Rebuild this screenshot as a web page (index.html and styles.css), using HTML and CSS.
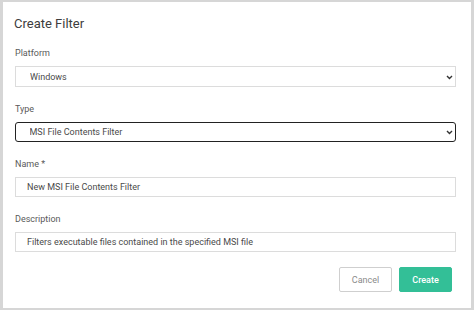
FILE: index.html
```html
<!DOCTYPE html>
<html lang="en">
<head>
<meta charset="utf-8">
<title>Create Filter</title>
<link rel="stylesheet" href="styles.css">
</head>
<body>
<div class="frame">
  <h1 class="title">Create Filter</h1>
  <form class="form">
    <div class="field">
      <label class="label" for="platform">Platform</label>
      <div class="select-wrap select-wrap--tall">
        <select id="platform" class="control select"><option>Windows</option></select>
        <svg class="chev" width="7" height="5" viewBox="0 0 7 5"><path d="M1 1 L3.5 3.5 L6 1" fill="none" stroke="#333" stroke-width="1.4"/></svg>
      </div>
    </div>
    <div class="field">
      <label class="label" for="type">Type</label>
      <div class="select-wrap">
        <select id="type" class="control select select--focus"><option>MSI File Contents Filter</option></select>
        <svg class="chev" width="7" height="5" viewBox="0 0 7 5"><path d="M1 1 L3.5 3.5 L6 1" fill="none" stroke="#333" stroke-width="1.4"/></svg>
      </div>
    </div>
    <div class="field">
      <label class="label" for="name">Name *</label>
      <input id="name" class="control input" value="New MSI File Contents Filter">
    </div>
    <div class="field">
      <label class="label" for="desc">Description</label>
      <input id="desc" class="control input" value="Filters executable files contained in the specified MSI file">
    </div>
    <div class="actions">
      <button type="button" class="btn btn--cancel">Cancel</button>
      <button type="button" class="btn btn--create">Create</button>
    </div>
  </form>
</div>
</body>
</html>
```

FILE: styles.css
```css
* { box-sizing: border-box; }
html, body { margin: 0; padding: 0; background: #fff; }
body { font-family: Roboto, "Liberation Sans", sans-serif; }

.frame {
  width: 474px;
  height: 310px;
  border-style: solid;
  border-color: #d6d6d6;
  border-width: 2px 3px 2px 3px;
  background: #fff;
  padding: 14px 15px 0 12px;
}

.title {
  margin: 0 0 15px -1px;
  font-size: 13px;
  line-height: 16px;
  font-weight: 400;
  color: #3d3d3d;
}

.form { display: flex; flex-direction: column; gap: 16px; }

.field { display: flex; flex-direction: column; gap: 7px; }

.label {
  font-size: 9px;
  line-height: 12px;
  color: #5a5a5a;
}

.control {
  display: block;
  width: 100%;
  height: 20px;
  margin: 0;
  font-family: Roboto, "Liberation Sans", sans-serif;
  font-size: 9px;
  color: #4a4a4a;
  background: #fff;
  border: 1px solid #dcdcdc;
  border-radius: 0;
  outline: none;
}

.input { padding: 0 11px; }

.select-wrap { position: relative; }
.select-wrap--tall .control { height: 21px; }

.select {
  appearance: none;
  -webkit-appearance: none;
  padding: 0 14px;
}

.select--focus {
  border: 1.5px solid #222;
  border-radius: 3px;
  padding-left: 13.5px;
}

.chev {
  position: absolute;
  right: 3px;
  top: 50%;
  margin-top: -2px;
  pointer-events: none;
}

.actions {
  display: flex;
  justify-content: flex-end;
  gap: 7px;
  margin: -1px 4px 0 0;
}

.btn {
  width: 53px;
  height: 25px;
  font-family: Roboto, "Liberation Sans", sans-serif;
  font-size: 9px;
  border-radius: 2px;
  padding: 0;
  cursor: pointer;
}

.btn--cancel {
  background: #fff;
  border: 1px solid #cfcfcf;
  color: #8a8a8a;
}

.btn--create {
  background: #33bf97;
  border: 1px solid #33bf97;
  color: #fff;
  font-weight: 500;
}
```
